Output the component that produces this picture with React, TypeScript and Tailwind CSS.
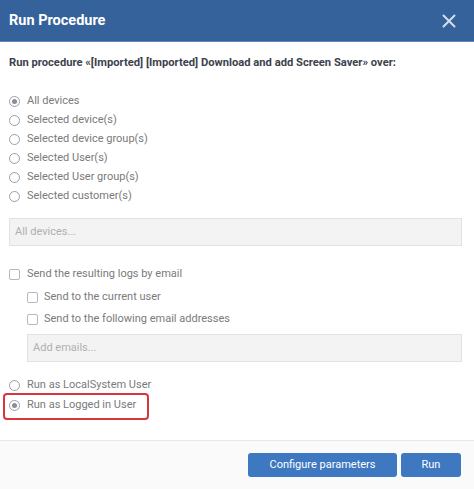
import React, { useState } from 'react'

const targets = [
  'All devices',
  'Selected device(s)',
  'Selected device group(s)',
  'Selected User(s)',
  'Selected User group(s)',
  'Selected customer(s)',
]

function Radio({ checked }: { checked: boolean }) {
  return (
    <span className="flex h-[11px] w-[11px] shrink-0 items-center justify-center rounded-full border border-[#9aa0a8] bg-white">
      {checked && <span className="h-[5px] w-[5px] rounded-full bg-[#8a8f96]" />}
    </span>
  )
}

function Checkbox() {
  return <span className="h-[11px] w-[11px] shrink-0 rounded-[2px] border border-[#b5b8bd] bg-white" />
}

export default function App() {
  const [target, setTarget] = useState(0)
  const [runAs, setRunAs] = useState(1)

  return (
    <div
      className="flex h-[489px] w-[474px] flex-col bg-white text-[11px] text-[#7a7a7a]"
      style={{ fontFamily: 'Roboto, "Liberation Sans", sans-serif' }}
    >
      {/* Header */}
      <div className="flex h-[42px] shrink-0 items-center justify-between border-b border-[#5a86bd] bg-[#35629b] pl-[9px] pr-[18px]">
        <div className="text-[14.5px] font-bold text-white">Run Procedure</div>
        <svg width="14" height="14" viewBox="0 0 14 14" className="mt-[1px]">
          <path d="M1.5 1.5L12.5 12.5M12.5 1.5L1.5 12.5" stroke="#d3deec" strokeWidth="2" strokeLinecap="round" />
        </svg>
      </div>

      {/* Body */}
      <div className="flex flex-1 flex-col px-[9px] pr-[12px]">
        <div className="mt-[13px] text-[11.2px] leading-[16px] font-bold text-[#3c3f4d]">
          Run procedure «[Imported] [Imported] Download and add Screen Saver» over:
        </div>

        <div className="mt-[21px] flex flex-col">
          {targets.map((t, i) => (
            <label
              key={t}
              className="flex h-[19px] cursor-pointer items-center gap-[7px]"
              onClick={() => setTarget(i)}
            >
              <Radio checked={target === i} />
              <span>{t}</span>
            </label>
          ))}
        </div>

        <div className="mt-[12px] flex h-[28px] items-center border border-[#e2e2e2] bg-[#f3f3f3] px-[5px] text-[#b0b0b0]">
          All devices...
        </div>

        <div className="mt-[17px] flex flex-col">
          <label className="flex h-[23px] items-center gap-[7px]">
            <Checkbox />
            <span>Send the resulting logs by email</span>
          </label>
          <div className="flex flex-col pl-[18px]">
            <label className="flex h-[22px] items-center gap-[6px]">
              <Checkbox />
              <span>Send to the current user</span>
            </label>
            <label className="flex h-[22px] items-center gap-[6px]">
              <Checkbox />
              <span>Send to the following email addresses</span>
            </label>
            <div className="mt-[4px] flex h-[28px] items-center border border-[#e2e2e2] bg-[#f3f3f3] px-[5px] text-[#b0b0b0]">
              Add emails...
            </div>
          </div>
        </div>

        <div className="mt-[14px] flex flex-col">
          <label className="flex h-[19px] items-center gap-[7px]" onClick={() => setRunAs(0)}>
            <Radio checked={runAs === 0} />
            <span>Run as LocalSystem User</span>
          </label>
          <div className="relative">
            <label className="flex h-[20px] items-center gap-[7px]" onClick={() => setRunAs(1)}>
              <Radio checked={runAs === 1} />
              <span>Run as Logged in User</span>
            </label>
            <div className="pointer-events-none absolute left-[-6px] top-[-2px] h-[27px] w-[146px] rounded-[4px] border-2 border-[#d8353d]" />
          </div>
        </div>
      </div>

      {/* Footer */}
      <div className="flex h-[49px] shrink-0 items-start justify-end gap-[4px] border-t border-[#e8e8e8] bg-[#fafafa] pr-[13px] pt-[12px]">
        <button className="h-[24px] w-[149px] rounded-[3px] bg-[#3d78c1] text-[11px] text-white">
          Configure parameters
        </button>
        <button className="h-[24px] w-[60px] rounded-[3px] bg-[#3d78c1] text-[11px] text-white">
          Run
        </button>
      </div>
    </div>
  )
}
